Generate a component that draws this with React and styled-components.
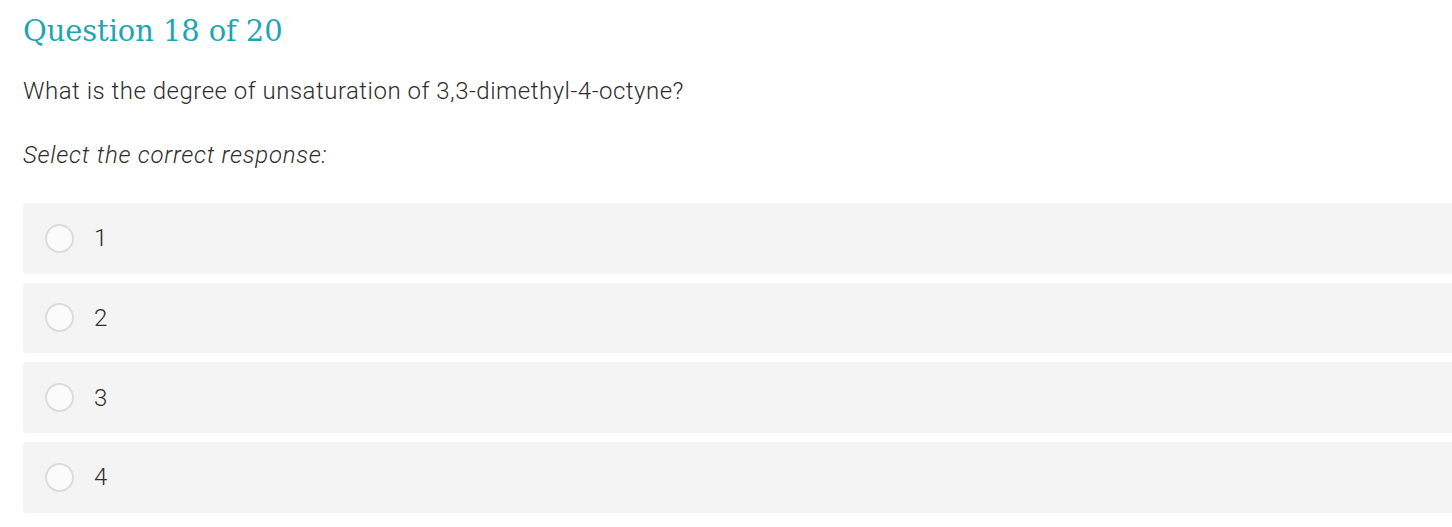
import React from 'react';
import styled, { createGlobalStyle } from 'styled-components';

const GlobalStyle = createGlobalStyle`
    html, body {
        margin: 0;
        padding: 0;
        background: #ffffff;
        overflow: hidden;
    }
`

const Page = styled.div`
    padding: 11px 0 0 23px;
    font-family: Roboto, "Noto Sans", sans-serif;
    color: #333333;
`

const Title = styled.h2`
    margin: 0;
    font-family: "DejaVu Serif", "Liberation Serif", serif;
    font-weight: 400;
    font-size: 29px;
    line-height: 40px;
    color: #1ea5b5;
    letter-spacing: -0.1px;
`

const Question = styled.p`
    margin: 26px 0 0 0;
    font-size: 24px;
    line-height: 28px;
    font-weight: 300;
    letter-spacing: 0.5px;
    color: #2e2e2e;
`

const Hint = styled.p`
    margin: 36px 0 0 0;
    font-size: 24px;
    line-height: 28px;
    font-style: italic;
    font-weight: 300;
    letter-spacing: 0.75px;
    color: #2e2e2e;
`

const Options = styled.div`
    display: flex;
    flex-direction: column;
    gap: 9px;
    margin-top: 34px;
    margin-right: -10px;
`

const Option = styled.label`
    display: flex;
    align-items: center;
    gap: 20px;
    height: 70.67px;
    padding-left: 22px;
    background: #f4f4f4;
    border-radius: 3px;
    font-size: 24px;
    font-weight: 300;
    color: #2e2e2e;
    cursor: pointer;
`

const Radio = styled.span`
    box-sizing: border-box;
    width: 29px;
    height: 29px;
    border-radius: 50%;
    border: 2px solid #dcdcdc;
    background: #fbfbfb;
    flex-shrink: 0;
`

const answers = ['1', '2', '3', '4'];

const App = () => {
    return (
        <Page>
            <GlobalStyle />
            <Title>Question 18 of 20</Title>
            <Question>What is the degree of unsaturation of 3,3-dimethyl-4-octyne?</Question>
            <Hint>Select the correct response:</Hint>
            <Options>
                {answers.map((a) => (
                    <Option key={a}>
                        <Radio />
                        {a}
                    </Option>
                ))}
            </Options>
        </Page>
    );
}

export default App;
